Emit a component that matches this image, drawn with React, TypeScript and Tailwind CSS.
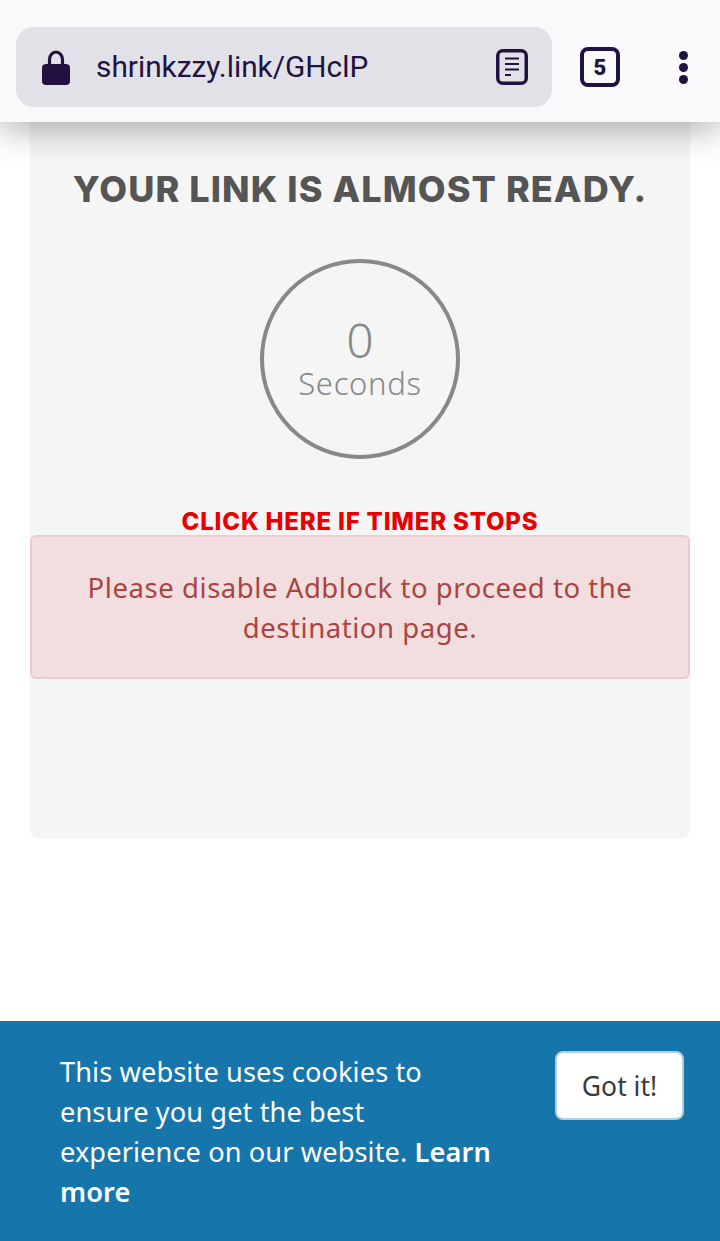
// Shortener wait page inside a mobile browser frame

const INK = "#22123f"

// ── Toolbar icons ─────────────────────────────────────────────────────────────

function LockIcon() {
  return (
    <svg width="30" height="37" viewBox="0 0 30 37" fill="none">
      <path d="M8.5 17V10.5a6.5 7.5 0 0 1 13 0V17" stroke={INK} strokeWidth="3.2" />
      <rect x="1" y="15" width="28" height="21" rx="4" fill={INK} />
    </svg>
  )
}

function ReaderIcon() {
  return (
    <svg width="32" height="36" viewBox="0 0 32 36" fill="none">
      <rect x="1.75" y="1.75" width="28.5" height="32.5" rx="5" stroke={INK} strokeWidth="3.5" />
      <path d="M9 9.5h14M9 15h14M9 20.5h14M9 26h6" stroke={INK} strokeWidth="2.2" />
    </svg>
  )
}

function Toolbar() {
  return (
    <header className="relative z-10 h-[122px] shrink-0 flex items-start pt-[27px] pl-4 bg-[#f9f9fc] shadow-[0_10px_30px_rgba(0,0,0,0.28)]">
      <div className="w-[536px] h-20 flex items-center rounded-[18px] bg-[#e1e1e7] pl-[25px] pr-[24px]">
        <LockIcon />
        <span className="ml-[25px] flex-1 font-['Roboto',sans-serif] text-[29.8px] text-[#22123f]">
          shrinkzzy.link/GHclP
        </span>
        <ReaderIcon />
      </div>
      <div className="ml-7 mt-5 w-10 h-10 flex items-center justify-center rounded-[8px] border-[4px] border-[#22123f] font-['Roboto',sans-serif] font-black text-[22px] text-[#22123f]">
        5
      </div>
      <div className="ml-[59px] mt-6 flex flex-col gap-[3px]">
        <span className="w-[9px] h-[9px] rounded-full bg-[#22123f]" />
        <span className="w-[9px] h-[9px] rounded-full bg-[#22123f]" />
        <span className="w-[9px] h-[9px] rounded-full bg-[#22123f]" />
      </div>
    </header>
  )
}

// ── Page ──────────────────────────────────────────────────────────────────────

function WaitCard() {
  return (
    <main className="mx-[30px] h-[717px] rounded-b-[10px] bg-[#f5f5f6] flex flex-col items-center pt-[45px]">
      <h1 className="font-['Inter',sans-serif] font-extrabold text-[36px] leading-[44px] tracking-[1.08px] text-[#555555] whitespace-nowrap">
        YOUR LINK IS ALMOST READY.
      </h1>
      <div className="mt-[48px] w-[200px] h-[200px] rounded-full border-[4px] border-[#888888] flex flex-col items-center justify-center font-['Noto_Sans',sans-serif] text-[#888888]">
        <span className="text-[48px] leading-[50px] font-light -mt-[3px]">0</span>
        <span className="text-[31px] leading-[36px] font-light tracking-[0.7px]">Seconds</span>
      </div>
      <a className="mt-[49px] h-[27px] font-['Inter',sans-serif] font-extrabold text-[24px] leading-[27px] tracking-[0.82px] text-[#e60000] whitespace-nowrap">
        CLICK HERE IF TIMER STOPS
      </a>
      <div className="w-full h-[144px] flex items-center justify-center rounded-[6px] border-2 border-[#ebccd1] bg-[#f2dede] px-10 pt-[2px] text-center font-['Noto_Sans',sans-serif] text-[27.5px] tracking-[0.56px] leading-10 text-[#a94442]">
        Please disable Adblock to proceed to the destination page.
      </div>
    </main>
  )
}

function CookieBar() {
  return (
    <footer className="h-[220px] shrink-0 bg-[#1675ab] flex items-start pl-[60px] pr-9 pt-[31px] font-['Noto_Sans',sans-serif] text-white">
      <p className="w-[440px] text-[27.2px] tracking-[0.1px] leading-10">
        This website uses cookies to ensure you get the best experience on our website.{" "}
        <span className="font-semibold">Learn more</span>
      </p>
      <button className="ml-auto -mt-[1px] w-[129px] h-[69px] pt-[2px] rounded-[8px] border-2 border-[#b3cddc] bg-white text-[26.5px] text-[#3a3a3a]">
        Got it!
      </button>
    </footer>
  )
}

export default function App() {
  return (
    <div className="w-[720px] h-[1241px] overflow-hidden bg-white flex flex-col justify-between">
      <div>
        <Toolbar />
        <WaitCard />
      </div>
      <CookieBar />
    </div>
  )
}
